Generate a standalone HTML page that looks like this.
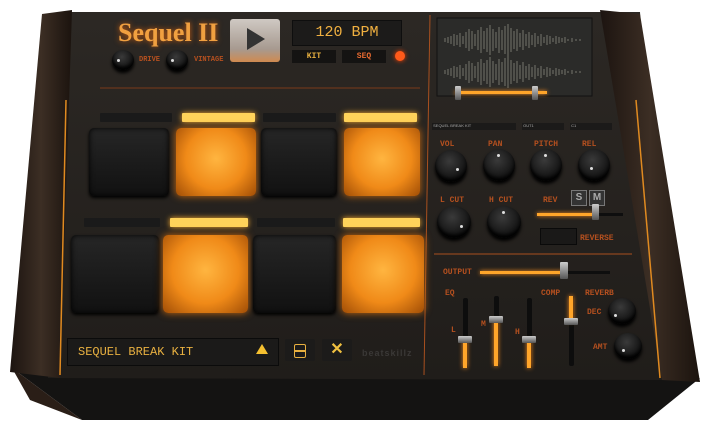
<!DOCTYPE html><html><head><style>
body{margin:0;width:705px;height:429px;background:#fff;position:relative;overflow:hidden;font-family:"Liberation Sans",sans-serif}
.a{position:absolute}
.cl{position:absolute;left:0;top:0;width:705px;height:429px}
.lbl{position:absolute;color:#b5501f;font-weight:bold;font-size:8px;font-family:"Liberation Mono",monospace}
.knob{position:absolute;border-radius:50%;background:radial-gradient(circle at 45% 35%,#3a3a3a,#161616 60%,#0a0a0a);box-shadow:0 3px 3px #000,inset 0 -3px 3px #000}
.knob i{position:absolute;width:3px;height:3px;border-radius:50%;background:#ddd}
.pad{position:absolute;border-radius:5px;background:linear-gradient(#262626,#111);box-shadow:inset 0 0 6px #000,0 2px 3px #000}
.opad{position:absolute;border-radius:5px;background:radial-gradient(circle at 50% 45%,#ffb540,#f08a18 55%,#a04d06);box-shadow:0 0 8px #c96a10}
.bar{position:absolute;height:9px;background:#ffd35a;box-shadow:0 0 6px #ffb030;border-radius:1px}
.dbar{position:absolute;height:9px;background:#1a1a1a;border-radius:1px}
.vs{position:absolute;width:5px;background:#0d0d0d;border-radius:2px}
.vf{position:absolute;width:4px;background:#ffa52a;box-shadow:0 0 5px #ff9020}
.cap{position:absolute;width:16px;height:7px;background:linear-gradient(#ccc,#555);border-radius:1px}
</style></head><body>
<svg class="cl" viewBox="0 0 705 429">
<defs><linearGradient id="w" x1="0" x2="1"><stop offset="0" stop-color="#1c1410"/><stop offset=".5" stop-color="#3c2e24"/><stop offset="1" stop-color="#1b130e"/></linearGradient>
<linearGradient id="f" x1="0" y1="0" x2="0" y2="1"><stop offset="0" stop-color="#2c2824"/><stop offset="1" stop-color="#201d1a"/></linearGradient></defs>
<polygon points="12,368 700,378 648,420 82,420" fill="#141312"/>
<polygon points="12,368 82,420 30,400" fill="#2a1e17"/>
<polygon points="60,12 640,12 662,380 48,378" fill="url(#f)"/>
<polygon points="42,14 72,10 60,378 10,372" fill="url(#w)"/>
<polygon points="600,10 640,14 700,382 662,380" fill="url(#w)"/>
<line x1="66" y1="100" x2="60" y2="375" stroke="#e08a20" stroke-width="1.5"/>
<line x1="636" y1="100" x2="660" y2="378" stroke="#e08a20" stroke-width="1.5"/>
<line x1="100" y1="88" x2="420" y2="88" stroke="#7a3a1a"/>
<line x1="430" y1="15" x2="424" y2="375" stroke="#a8501f"/>
<line x1="434" y1="254" x2="632" y2="254" stroke="#a8501f"/>
<rect x="437" y="18" width="155" height="78" fill="#2b2b29" stroke="#111"/>
<g stroke="#6a6a62" stroke-width="1.2">
<path d="M445,38v4M448,37v6M451,36v8M454,34v12M457,35v10M460,33v14M463,36v8M466,32v16M469,29v22M472,31v18M475,34v12M478,30v20M481,27v26M484,31v18M487,28v24M490,25v30M493,29v22M496,32v16M499,27v26M502,30v20M505,26v28M508,24v32M511,28v24M514,31v18M517,29v22M520,33v14M523,30v20M526,34v12M529,32v16M532,35v10M535,33v14M538,36v8M541,34v12M544,37v6M547,35v10M550,36v8M553,38v4M556,36v8M559,37v6M562,38v4M565,37v6M568,39v2M572,38v4M576,39v2M580,39v2"/>
<path d="M445,70v4M448,69v6M451,68v8M454,66v12M457,67v10M460,65v14M463,68v8M466,64v16M469,61v22M472,63v18M475,66v12M478,62v20M481,59v26M484,63v18M487,60v24M490,57v30M493,61v22M496,64v16M499,59v26M502,62v20M505,58v28M508,56v32M511,60v24M514,63v18M517,61v22M520,65v14M523,62v20M526,66v12M529,64v16M532,67v10M535,65v14M538,68v8M541,66v12M544,69v6M547,67v10M550,68v8M553,70v4M556,68v8M559,69v6M562,70v4M565,69v6M568,71v2M572,70v4M576,71v2M580,71v2"/>
</g>
</svg>
<div class="a" style="left:118px;top:18px;font:bold 26px 'Liberation Serif',serif;color:#f0a040;text-shadow:0 0 6px #d06010">Sequel II</div>
<div class="knob" style="left:112px;top:50px;width:22px;height:20px"><i style="left:5px;top:9px"></i></div>
<div class="lbl" style="left:139px;top:56px;font-size:7px">DRIVE</div>
<div class="knob" style="left:166px;top:50px;width:22px;height:20px"><i style="left:5px;top:9px"></i></div>
<div class="lbl" style="left:194px;top:56px;font-size:7px">VINTAGE</div>
<div class="a" style="left:230px;top:19px;width:50px;height:43px;border-radius:3px;background:linear-gradient(#cfc9c3,#a79a90 70%,#d08a50)"></div>
<div class="a" style="left:247px;top:28px;width:0;height:0;border-left:18px solid #333;border-top:11px solid transparent;border-bottom:11px solid transparent"></div>
<div class="a" style="left:292px;top:20px;width:108px;height:24px;background:#1c1b1a;border:1px solid #0e0e0e;color:#f0b040;font:15px 'Liberation Mono',monospace;text-align:center;line-height:24px">120 BPM</div>
<div class="a" style="left:292px;top:50px;width:44px;height:13px;background:#141312;color:#e8b040;font:bold 8px 'Liberation Mono',monospace;text-align:center;line-height:13px">KIT</div>
<div class="a" style="left:342px;top:50px;width:44px;height:13px;background:#141312;color:#e86a30;font:bold 8px 'Liberation Mono',monospace;text-align:center;line-height:13px">SEQ</div>
<div class="a" style="left:395px;top:51px;width:10px;height:10px;border-radius:50%;background:#ff5a1a;box-shadow:0 0 5px #ff4000"></div>
<div class="a" style="left:455px;top:91px;width:92px;height:3px;background:#ffa52a;box-shadow:0 0 4px #ff9020"></div>
<div class="cap" style="left:455px;top:86px;width:6px;height:14px"></div><div class="cap" style="left:532px;top:86px;width:6px;height:14px"></div>
<div class="dbar" style="left:100px;top:113px;width:72px"></div>
<div class="bar" style="left:182px;top:113px;width:73px"></div>
<div class="dbar" style="left:263px;top:113px;width:73px"></div>
<div class="bar" style="left:344px;top:113px;width:73px"></div>
<div class="pad" style="left:89px;top:128px;width:80px;height:68px"></div>
<div class="opad" style="left:176px;top:128px;width:80px;height:68px"></div>
<div class="pad" style="left:261px;top:128px;width:76px;height:68px"></div>
<div class="opad" style="left:344px;top:128px;width:76px;height:68px"></div>
<div class="dbar" style="left:84px;top:218px;width:76px"></div>
<div class="bar" style="left:170px;top:218px;width:78px"></div>
<div class="dbar" style="left:257px;top:218px;width:78px"></div>
<div class="bar" style="left:343px;top:218px;width:77px"></div>
<div class="pad" style="left:71px;top:235px;width:88px;height:78px"></div>
<div class="opad" style="left:163px;top:235px;width:85px;height:78px"></div>
<div class="pad" style="left:253px;top:235px;width:83px;height:78px"></div>
<div class="opad" style="left:342px;top:235px;width:82px;height:78px"></div>
<div class="a" style="left:67px;top:338px;width:210px;height:26px;background:#1b1a19;border:1px solid #0b0b0b;color:#e8b040;font:12px 'Liberation Mono',monospace;line-height:26px;text-indent:10px">SEQUEL BREAK KIT</div>
<div class="a" style="left:256px;top:344px;width:0;height:0;border-bottom:10px solid #f5c030;border-left:6px solid transparent;border-right:6px solid transparent"></div>
<div class="a" style="left:285px;top:339px;width:30px;height:22px;background:#1c1b1a;border-radius:2px"></div>
<div class="a" style="left:294px;top:344px;width:10px;height:12px;border:1.5px solid #e8b040;border-radius:2px"></div>
<div class="a" style="left:294px;top:350px;width:12px;height:1.5px;background:#e8b040"></div>
<div class="a" style="left:322px;top:339px;width:30px;height:22px;background:#1c1b1a;border-radius:2px;color:#f0c040;font:bold 16px sans-serif;text-align:center;line-height:22px">✕</div>
<div class="a" style="left:362px;top:348px;color:#3a3836;font:bold 9px sans-serif;letter-spacing:1px">beatskillz</div>
<div class="a" style="left:432px;top:123px;width:84px;height:7px;background:#1b1a19;color:#aaa;font:4px sans-serif">&nbsp;SEQUEL BREAK KIT</div>
<div class="a" style="left:522px;top:123px;width:42px;height:7px;background:#1b1a19;color:#aaa;font:4px sans-serif">&nbsp;OUT1</div>
<div class="a" style="left:570px;top:123px;width:42px;height:7px;background:#1b1a19;color:#aaa;font:4px sans-serif">&nbsp;C1</div>
<div class="lbl" style="left:440px;top:140px">VOL</div><div class="lbl" style="left:488px;top:140px">PAN</div><div class="lbl" style="left:534px;top:140px">PITCH</div><div class="lbl" style="left:582px;top:140px">REL</div>
<div class="knob" style="left:435px;top:150px;width:32px;height:32px"><i style="left:21px;top:18px"></i></div>
<div class="knob" style="left:483px;top:149px;width:32px;height:32px"><i style="left:14px;top:5px"></i></div>
<div class="knob" style="left:530px;top:149px;width:32px;height:32px"><i style="left:14px;top:5px"></i></div>
<div class="knob" style="left:578px;top:149px;width:32px;height:32px"><i style="left:12px;top:18px"></i></div>
<div class="lbl" style="left:440px;top:196px">L CUT</div><div class="lbl" style="left:489px;top:196px">H CUT</div><div class="lbl" style="left:543px;top:196px">REV</div>
<div class="knob" style="left:437px;top:206px;width:34px;height:32px"><i style="left:23px;top:19px"></i></div>
<div class="knob" style="left:487px;top:206px;width:34px;height:32px"><i style="left:15px;top:5px"></i></div>
<div class="a" style="left:571px;top:190px;width:14px;height:14px;border:1px solid #777;background:#333;color:#aaa;font:bold 10px sans-serif;text-align:center;line-height:14px">S</div>
<div class="a" style="left:589px;top:190px;width:14px;height:14px;border:1px solid #777;background:#333;color:#aaa;font:bold 10px sans-serif;text-align:center;line-height:14px">M</div>
<div class="a" style="left:537px;top:213px;width:58px;height:3px;background:#ffa52a;box-shadow:0 0 4px #ff9020"></div>
<div class="a" style="left:595px;top:213px;width:28px;height:3px;background:#0e0e0e"></div>
<div class="cap" style="left:592px;top:204px;width:7px;height:16px"></div>
<div class="a" style="left:540px;top:228px;width:35px;height:15px;background:#1a1918;border:1px solid #0a0a0a"></div>
<div class="lbl" style="left:580px;top:234px">REVERSE</div>
<div class="lbl" style="left:443px;top:268px">OUTPUT</div>
<div class="a" style="left:480px;top:271px;width:85px;height:3px;background:#ffa52a;box-shadow:0 0 4px #ff9020"></div>
<div class="a" style="left:565px;top:271px;width:45px;height:3px;background:#0e0e0e"></div>
<div class="cap" style="left:560px;top:262px;width:8px;height:17px"></div>
<div class="lbl" style="left:445px;top:289px">EQ</div><div class="lbl" style="left:541px;top:289px">COMP</div><div class="lbl" style="left:585px;top:289px">REVERB</div>
<div class="lbl" style="left:451px;top:326px">L</div><div class="lbl" style="left:481px;top:320px">M</div><div class="lbl" style="left:515px;top:328px">H</div>
<div class="lbl" style="left:587px;top:308px">DEC</div><div class="lbl" style="left:593px;top:343px">AMT</div>
<div class="vs" style="left:463px;top:298px;height:70px"></div><div class="vf" style="left:463px;top:340px;height:28px"></div><div class="cap" style="left:458px;top:336px;width:14px"></div>
<div class="vs" style="left:494px;top:296px;height:70px"></div><div class="vf" style="left:494px;top:320px;height:46px"></div><div class="cap" style="left:489px;top:316px;width:14px"></div>
<div class="vs" style="left:527px;top:298px;height:70px"></div><div class="vf" style="left:527px;top:340px;height:28px"></div><div class="cap" style="left:522px;top:336px;width:14px"></div>
<div class="vs" style="left:569px;top:296px;height:70px"></div><div class="vf" style="left:569px;top:296px;height:26px"></div><div class="cap" style="left:564px;top:318px;width:14px"></div>
<div class="knob" style="left:608px;top:298px;width:28px;height:26px"><i style="left:6px;top:16px"></i></div>
<div class="knob" style="left:614px;top:333px;width:28px;height:26px"><i style="left:8px;top:16px"></i></div>
</body></html>
